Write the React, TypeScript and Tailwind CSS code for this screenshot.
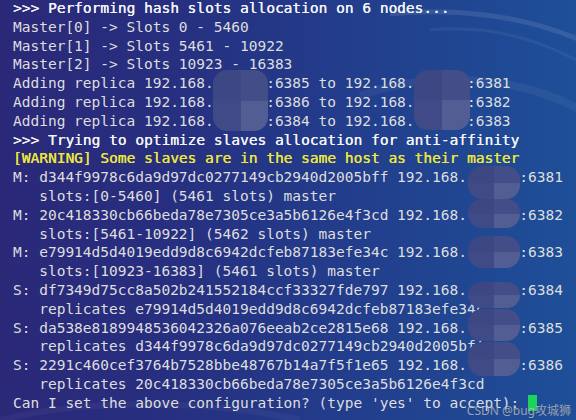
import React from 'react';

type Line = { text: string; tone?: 'bold' | 'warn' };

const lines: Line[] = [
  { text: '>>> Performing hash slots allocation on 6 nodes...', tone: 'bold' },
  { text: 'Master[0] -> Slots 0 - 5460' },
  { text: 'Master[1] -> Slots 5461 - 10922' },
  { text: 'Master[2] -> Slots 10923 - 16383' },
  { text: 'Adding replica 192.168.      :6385 to 192.168.      :6381' },
  { text: 'Adding replica 192.168.      :6386 to 192.168.      :6382' },
  { text: 'Adding replica 192.168.      :6384 to 192.168.      :6383' },
  { text: '>>> Trying to optimize slaves allocation for anti-affinity', tone: 'bold' },
  { text: '[WARNING] Some slaves are in the same host as their master', tone: 'warn' },
  { text: 'M: d344f9978c6da9d97dc0277149cb2940d2005bff 192.168.      :6381' },
  { text: '   slots:[0-5460] (5461 slots) master' },
  { text: 'M: 20c418330cb66beda78e7305ce3a5b6126e4f3cd 192.168.      :6382' },
  { text: '   slots:[5461-10922] (5462 slots) master' },
  { text: 'M: e79914d5d4019edd9d8c6942dcfeb87183efe34c 192.168.      :6383' },
  { text: '   slots:[10923-16383] (5461 slots) master' },
  { text: 'S: df7349d75cc8a502b241552184ccf33327fde797 192.168.      :6384' },
  { text: '   replicates e79914d5d4019edd9d8c6942dcfeb87183efe34c' },
  { text: 'S: da538e8189948536042326a076eeab2ce2815e68 192.168.      :6385' },
  { text: '   replicates d344f9978c6da9d97dc0277149cb2940d2005bff' },
  { text: 'S: 2291c460cef3764b7528bbe48767b14a7f5f1e65 192.168.      :6386' },
  { text: '   replicates 20c418330cb66beda78e7305ce3a5b6126e4f3cd' },
];

// pixelated patches hiding the host part of the IPs
const mosaics = [
  { x: 213, y: 70, w: 55, h: 61 },
  { x: 414, y: 70, w: 56, h: 60 },
  { x: 468, y: 166, w: 52, h: 33 },
  { x: 468, y: 199, w: 52, h: 29 },
  { x: 468, y: 236, w: 52, h: 32 },
  { x: 468, y: 282, w: 52, h: 26 },
  { x: 468, y: 309, w: 52, h: 32 },
  { x: 468, y: 342, w: 52, h: 34 },
];

function Mosaic({ x, y, w, h }: { x: number; y: number; w: number; h: number }) {
  return (
    <div
      className="absolute grid grid-cols-2 grid-rows-2 overflow-hidden rounded-[14px] blur-[0.6px]"
      style={{ left: x, top: y, width: w, height: h }}
    >
      <div className="bg-[#3c4784]" />
      <div className="bg-[#434e88]" />
      <div className="bg-[#404a86]" />
      <div className="bg-[#525e93]" />
    </div>
  );
}

export default function App() {
  return (
    <div className="relative w-[576px] h-[420px] overflow-hidden bg-[linear-gradient(90deg,#2b2878_0%,#272f80_30%,#223d8c_60%,#1e4f98_100%)]">
      {/* wallpaper swirls */}
      <svg className="absolute inset-0" width="576" height="420" viewBox="0 0 576 420">
        <path d="M390 14 C450 8 520 14 580 40" stroke="#ffffff" strokeOpacity="0.1" strokeWidth="5" fill="none" />
        <path d="M430 30 C490 24 540 40 580 62" stroke="#ffffff" strokeOpacity="0.06" strokeWidth="3" fill="none" />
        <path d="M360 96 C430 70 520 76 580 110" stroke="#ffffff" strokeOpacity="0.05" strokeWidth="8" fill="none" />
        <path d="M0 420 C80 400 200 398 300 420" stroke="#ffffff" strokeOpacity="0.04" strokeWidth="6" fill="none" />
      </svg>

      <div className="relative mt-[-1px] pl-[13px] font-['DejaVu_Sans_Mono',monospace] text-[14.5px] leading-[18.8px] text-[#dedede]">
        {lines.map((l, i) => (
          <div
            key={i}
            className={
              'h-[18.8px] whitespace-pre ' +
              (l.tone === 'bold'
                ? 'text-[#f4f4f4] [text-shadow:0.25px_0_0_#f4f4f4]'
                : l.tone === 'warn'
                  ? 'text-[#ece63c] [text-shadow:0.25px_0_0_#ece63c]'
                  : '')
            }
          >
            {l.text}
          </div>
        ))}
        <div className="h-[18.8px] flex items-center whitespace-pre">
          <span>{"Can I set the above configuration? (type 'yes' to accept): "}</span>
          <span className="inline-block w-[9px] h-[16px] bg-[#1ed35c]" />
        </div>
      </div>

      {mosaics.map((m, i) => (
        <Mosaic key={i} {...m} />
      ))}

      <div className="absolute right-[5px] bottom-[1px] font-['Noto_Sans','Noto_Sans_CJK_SC',sans-serif] text-[12px] leading-[16px] text-white/55 [text-shadow:0_0_1px_rgba(0,0,0,0.4)]">
        CSDN @bug攻城狮
      </div>
    </div>
  );
}
